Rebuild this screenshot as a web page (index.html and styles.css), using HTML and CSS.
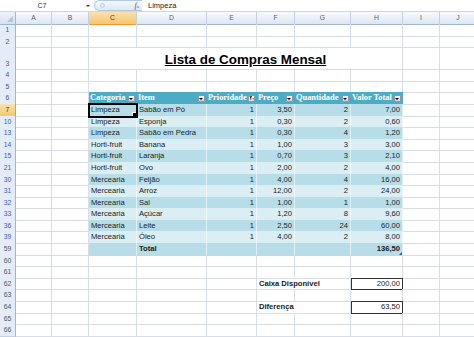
FILE: index.html
```html
<!DOCTYPE html>
<html lang="pt">
<head>
<meta charset="utf-8">
<title>Lista de Compras Mensal</title>
<link rel="stylesheet" href="styles.css">
</head>
<body>
<div class="fbar">
  <div class="namebox">C7</div>
  <div class="nb-arrow"></div>
  <div class="fx-pill"><span class="fx-circle"></span><span class="fx">f<span class="fx-x">x</span></span></div>
  <div class="formula">Limpeza</div>
</div>
<div class="sheet">
  <div class="row colhdr">
    <div class="corner"></div><div class="ch">A</div><div class="ch">B</div><div class="ch sel">C</div><div class="ch">D</div><div class="ch">E</div><div class="ch">F</div><div class="ch">G</div><div class="ch">H</div><div class="ch">I</div><div class="ch">J</div>
  </div>
  <div class="row"><div class="rh">1</div><div class="c"></div><div class="c"></div><div class="c"></div><div class="c"></div><div class="c"></div><div class="c"></div><div class="c"></div><div class="c"></div><div class="c"></div><div class="c"></div></div>
  <div class="row"><div class="rh">2</div><div class="c"></div><div class="c"></div><div class="c"></div><div class="c"></div><div class="c"></div><div class="c"></div><div class="c"></div><div class="c"></div><div class="c"></div><div class="c"></div></div>
  <div class="row tall"><div class="rh">3</div><div class="c"></div><div class="c"></div><div class="c title"><span class="title-text">Lista de Compras Mensal</span></div><div class="c"></div><div class="c"></div></div>
  <div class="row"><div class="rh">4</div><div class="c"></div><div class="c"></div><div class="c"></div><div class="c"></div><div class="c"></div><div class="c"></div><div class="c"></div><div class="c"></div><div class="c"></div><div class="c"></div></div>
  <div class="row"><div class="rh">5</div><div class="c"></div><div class="c"></div><div class="c"></div><div class="c"></div><div class="c"></div><div class="c"></div><div class="c"></div><div class="c"></div><div class="c"></div><div class="c"></div></div>
  <div class="row"><div class="rh">6</div><div class="c"></div><div class="c"></div>
    <div class="c th"><span>Categoria</span><span class="dd"></span></div>
    <div class="c th"><span>Item</span><span class="dd"></span></div>
    <div class="c th"><span>Prioridade</span><span class="dd filt"><svg viewBox="0 0 7 7" width="5" height="5"><path d="M0.5 0.5h4l-1.5 2v3l-1 -0.8v-2.2z" fill="#000"/><path d="M5 3.5l1 1.5l1-1.5z" fill="#000"/></svg></span></div>
    <div class="c th"><span>Preço</span><span class="dd"></span></div>
    <div class="c th"><span>Quantidade</span><span class="dd"></span></div>
    <div class="c th"><span>Valor Total</span><span class="dd"></span></div>
    <div class="c"></div><div class="c"></div></div>
  <div class="row"><div class="rh sel">7</div><div class="c"></div><div class="c"></div><div class="c t m active">Limpeza</div><div class="c t m">Sabão em Pó</div><div class="c t m n">1</div><div class="c t m n">3,50</div><div class="c t m n">2</div><div class="c t m n">7,00</div><div class="c"></div><div class="c"></div></div>
  <div class="row"><div class="rh f">10</div><div class="c"></div><div class="c"></div><div class="c t l">Limpeza</div><div class="c t l">Esponja</div><div class="c t l n">1</div><div class="c t l n">0,30</div><div class="c t l n">2</div><div class="c t l n">0,60</div><div class="c"></div><div class="c"></div></div>
  <div class="row"><div class="rh f">13</div><div class="c"></div><div class="c"></div><div class="c t m">Limpeza</div><div class="c t m">Sabão em Pedra</div><div class="c t m n">1</div><div class="c t m n">0,30</div><div class="c t m n">4</div><div class="c t m n">1,20</div><div class="c"></div><div class="c"></div></div>
  <div class="row"><div class="rh f">14</div><div class="c"></div><div class="c"></div><div class="c t l">Horti-fruit</div><div class="c t l">Banana</div><div class="c t l n">1</div><div class="c t l n">1,00</div><div class="c t l n">3</div><div class="c t l n">3,00</div><div class="c"></div><div class="c"></div></div>
  <div class="row"><div class="rh f">15</div><div class="c"></div><div class="c"></div><div class="c t m">Horti-fruit</div><div class="c t m">Laranja</div><div class="c t m n">1</div><div class="c t m n">0,70</div><div class="c t m n">3</div><div class="c t m n">2,10</div><div class="c"></div><div class="c"></div></div>
  <div class="row"><div class="rh f">21</div><div class="c"></div><div class="c"></div><div class="c t l">Horti-fruit</div><div class="c t l">Ovo</div><div class="c t l n">1</div><div class="c t l n">2,00</div><div class="c t l n">2</div><div class="c t l n">4,00</div><div class="c"></div><div class="c"></div></div>
  <div class="row"><div class="rh f">30</div><div class="c"></div><div class="c"></div><div class="c t m">Mercearia</div><div class="c t m">Feijão</div><div class="c t m n">1</div><div class="c t m n">4,00</div><div class="c t m n">4</div><div class="c t m n">16,00</div><div class="c"></div><div class="c"></div></div>
  <div class="row"><div class="rh f">31</div><div class="c"></div><div class="c"></div><div class="c t l">Mercearia</div><div class="c t l">Arroz</div><div class="c t l n">1</div><div class="c t l n">12,00</div><div class="c t l n">2</div><div class="c t l n">24,00</div><div class="c"></div><div class="c"></div></div>
  <div class="row"><div class="rh f">32</div><div class="c"></div><div class="c"></div><div class="c t m">Mercearia</div><div class="c t m">Sal</div><div class="c t m n">1</div><div class="c t m n">1,00</div><div class="c t m n">1</div><div class="c t m n">1,00</div><div class="c"></div><div class="c"></div></div>
  <div class="row"><div class="rh f">33</div><div class="c"></div><div class="c"></div><div class="c t l">Mercearia</div><div class="c t l">Açúcar</div><div class="c t l n">1</div><div class="c t l n">1,20</div><div class="c t l n">8</div><div class="c t l n">9,60</div><div class="c"></div><div class="c"></div></div>
  <div class="row"><div class="rh f">36</div><div class="c"></div><div class="c"></div><div class="c t m">Mercearia</div><div class="c t m">Leite</div><div class="c t m n">1</div><div class="c t m n">2,50</div><div class="c t m n">24</div><div class="c t m n">60,00</div><div class="c"></div><div class="c"></div></div>
  <div class="row"><div class="rh f">39</div><div class="c"></div><div class="c"></div><div class="c t l">Mercearia</div><div class="c t l">Óleo</div><div class="c t l n">1</div><div class="c t l n">4,00</div><div class="c t l n">2</div><div class="c t l n">8,00</div><div class="c"></div><div class="c"></div></div>
  <div class="row"><div class="rh">59</div><div class="c"></div><div class="c"></div><div class="c t m"></div><div class="c t m b">Total</div><div class="c t m"></div><div class="c t m"></div><div class="c t m"></div><div class="c t m n b last">136,50</div><div class="c"></div><div class="c"></div></div>
  <div class="row"><div class="rh">60</div><div class="c"></div><div class="c"></div><div class="c"></div><div class="c"></div><div class="c"></div><div class="c"></div><div class="c"></div><div class="c"></div><div class="c"></div><div class="c"></div></div>
  <div class="row"><div class="rh">61</div><div class="c"></div><div class="c"></div><div class="c"></div><div class="c"></div><div class="c"></div><div class="c"></div><div class="c"></div><div class="c"></div><div class="c"></div><div class="c"></div></div>
  <div class="row"><div class="rh">62</div><div class="c"></div><div class="c"></div><div class="c"></div><div class="c"></div><div class="c"></div><div class="c b span2">Caixa Disponível</div><div class="c n boxed">200,00</div><div class="c"></div><div class="c"></div></div>
  <div class="row"><div class="rh">63</div><div class="c"></div><div class="c"></div><div class="c"></div><div class="c"></div><div class="c"></div><div class="c"></div><div class="c"></div><div class="c"></div><div class="c"></div><div class="c"></div></div>
  <div class="row"><div class="rh">64</div><div class="c"></div><div class="c"></div><div class="c"></div><div class="c"></div><div class="c"></div><div class="c b span2">Diferença</div><div class="c n boxed">63,50</div><div class="c"></div><div class="c"></div></div>
  <div class="row"><div class="rh">65</div><div class="c"></div><div class="c"></div><div class="c"></div><div class="c"></div><div class="c"></div><div class="c"></div><div class="c"></div><div class="c"></div><div class="c"></div><div class="c"></div></div>
  <div class="row"><div class="rh">66</div><div class="c"></div><div class="c"></div><div class="c"></div><div class="c"></div><div class="c"></div><div class="c"></div><div class="c"></div><div class="c"></div><div class="c"></div><div class="c"></div></div>
</div>
</body>
</html>
```

FILE: styles.css
```css
* { box-sizing: border-box; margin: 0; padding: 0; }
html, body { width: 474px; height: 337px; overflow: hidden; background: #fff; }
body { font-family: "Liberation Sans", Arial, sans-serif; color: #000; }

/* formula bar */
.fbar {
  display: flex;
  align-items: center;
  height: 12px;
  background: #fff;
  border-bottom: 1px solid #c9d7ea;
}
.namebox { width: 84px; text-align: center; font-size: 7px; color: #333; }
.nb-arrow {
  width: 0; height: 0;
  border-left: 2px solid transparent;
  border-right: 2px solid transparent;
  border-top: 2.5px solid #333;
  margin-left: 2px;
}
.fx-pill {
  display: flex;
  align-items: center;
  justify-content: space-between;
  width: 48px;
  height: 11px;
  margin-left: 4px;
  padding: 0 3px 0 5px;
  border: 1px solid #b7c8de;
  border-right: 0;
  border-radius: 6px 0 0 6px;
  background: linear-gradient(#f4f8fc, #dfe8f3);
}
.fx-circle {
  width: 5px; height: 5px;
  border-radius: 50%;
  border: 1px solid #c4cfdc;
  background: #e8eef5;
}
.fx { font-family: "Liberation Serif", serif; font-style: italic; font-size: 8px; color: #555; }
.fx-x { font-size: 5px; }
.formula { margin-left: 6px; font-size: 7.5px; color: #222; }

/* sheet grid */
.sheet { display: flex; flex-direction: column; }
.row {
  display: grid;
  grid-template-columns: 16px 36px 37px 48px 70px 50px 38px 56px 52px 37px 37px;
  height: 11.6px;
}
.row.tall { height: 21.8px; }
.row.colhdr { height: 12.2px; }

.corner {
  position: relative;
  background: linear-gradient(#eef3fa, #d8e2ef);
  border-right: 1px solid #9eb6ce;
  border-bottom: 1px solid #9eb6ce;
}
.corner::after {
  content: "";
  position: absolute;
  right: 2px; bottom: 2px;
  width: 0; height: 0;
  border-left: 6px solid transparent;
  border-bottom: 6px solid #b4c5da;
}
.ch {
  background: linear-gradient(#f8fafd, #dde6f1);
  border-right: 1px solid #c2d0e2;
  border-bottom: 1px solid #9eb6ce;
  font-size: 6.8px;
  color: #4f5d72;
  text-align: center;
  line-height: 11.6px;
}
.ch.sel {
  background: linear-gradient(#fae1ae, #f5c76f);
  border-bottom-color: #f29536;
  color: #3b3b3b;
}
.rh {
  background: #e4ecf7;
  border-right: 1px solid #9eb6ce;
  border-bottom: 1px solid #c5d2e3;
  font-size: 6.8px;
  color: #4a586e;
  text-align: center;
  line-height: 11.6px;
}
.row.tall .rh { padding-top: 10.4px; }
.rh.f { color: #3d5cbd; }
.rh.sel {
  background: linear-gradient(#fae1ae, #f5c76f);
  border-right-color: #f29536;
  color: #3b3b3b;
}

.c {
  border-right: 1px solid #d9dee6;
  border-bottom: 1px solid #d9dee6;
  font-size: 7.6px;
  line-height: 12.6px;
  padding: 0 2px;
  white-space: nowrap;
  overflow: hidden;
  color: #1a1a1a;
}
.n { text-align: right; }
.b { font-weight: bold; }
.span2 { grid-column: span 2; }

.title {
  grid-column: span 6;
  display: flex;
  align-items: flex-end;
  justify-content: center;
  padding-bottom: 3px;
}
.title-text {
  font-size: 13.4px;
  line-height: 1;
  font-weight: bold;
  text-decoration: underline;
  text-underline-offset: 1px;
  color: #000;
}

/* table */
.t { border-right-color: rgba(255,255,255,0.55); border-bottom-color: transparent; }
.t.m { background: #b7dee8; }
.t.l { background: #daeef3; }
.th {
  display: flex;
  align-items: center;
  justify-content: space-between;
  background: #4bacc6;
  border-right-color: #4bacc6;
  border-bottom-color: #4bacc6;
  color: #fff;
  font-family: "Liberation Serif", serif;
  font-weight: bold;
  font-size: 8.4px;
  padding: 1px 1px 0 1px;
}
.dd {
  position: relative;
  flex: none;
  width: 7.5px;
  height: 7.5px;
  background: linear-gradient(#fbfbfb, #d6d6d6);
  border: 1px solid #8e9aa6;
  display: flex;
  align-items: center;
  justify-content: center;
}
.dd::after {
  content: "";
  width: 0; height: 0;
  border-left: 2px solid transparent;
  border-right: 2px solid transparent;
  border-top: 2px solid #000;
}
.dd.filt::after { display: none; }

.active { position: relative; outline: 2px solid #000; outline-offset: -1px; }
.active::after {
  content: "";
  position: absolute;
  right: -2px; bottom: -2px;
  width: 4px; height: 4px;
  background: #000;
  border: 1px solid #fff;
}
.last { position: relative; }
.last::after {
  content: "";
  position: absolute;
  right: 0; bottom: 0;
  width: 0; height: 0;
  border-left: 3px solid transparent;
  border-bottom: 3px solid #2f5d8a;
}
.boxed { outline: 1px solid #333; outline-offset: -1px; }
```
